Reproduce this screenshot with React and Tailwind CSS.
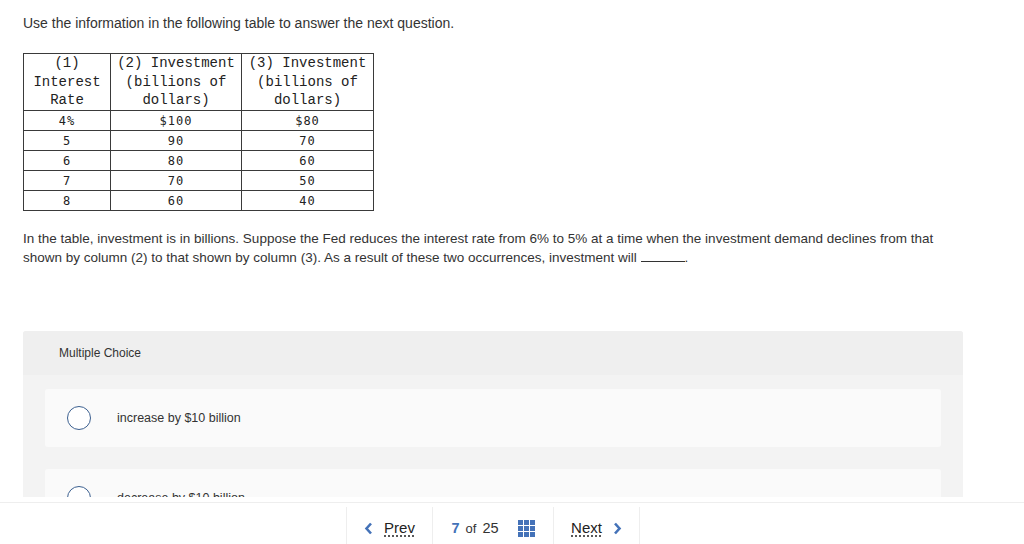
import React from "react";

const rows = [
  ["4%", "$100", "$80"],
  ["5", "90", "70"],
  ["6", "80", "60"],
  ["7", "70", "50"],
  ["8", "60", "40"],
];

const options = ["increase by $10 billion", "decrease by $10 billion"];

const GridIcon = () => (
  <svg width="17" height="17" viewBox="0 0 17 17" fill="#4472b8">
    {[0, 6, 12].map((y) =>
      [0, 6, 12].map((x) => (
        <rect key={`${x}-${y}`} x={x} y={y} width="5" height="5" />
      ))
    )}
  </svg>
);

const Chevron = ({ dir }) => (
  <svg width="9" height="13" viewBox="0 0 9 13" fill="none">
    <path
      d={dir === "left" ? "M7 1.5 L2.5 6.5 L7 11.5" : "M2 1.5 L6.5 6.5 L2 11.5"}
      stroke="#4472b8"
      strokeWidth="2.6"
    />
  </svg>
);

const App = () => {
  return (
    <div className="h-[544px] w-[1024px] flex flex-col bg-white text-[#333] font-['Liberation_Sans',Arial,sans-serif] overflow-hidden">
      {/* question area */}
      <div className="h-[497px] overflow-hidden pl-[23px] pt-[14px] w-[963px]">
        <p className="text-[14px] leading-[19px]">
          Use the information in the following table to answer the next question.
        </p>

        <table className="mt-[20px] border-collapse border border-[#3a3a3a] text-[#222]">
          <thead>
            <tr className="font-['Liberation_Mono',monospace] text-[14px] leading-[18.5px]">
              <th className="w-[87px] h-[57px] border border-[#3a3a3a] font-normal align-middle">
                (1)<br />Interest<br />Rate
              </th>
              <th className="w-[131px] border border-[#3a3a3a] font-normal">
                (2) Investment<br />(billions of<br />dollars)
              </th>
              <th className="w-[132px] border border-[#3a3a3a] font-normal">
                (3) Investment<br />(billions of<br />dollars)
              </th>
            </tr>
          </thead>
          <tbody className="font-['DejaVu_Sans_Mono',monospace] text-[12px] tracking-[1px]">
            {rows.map((r, i) => (
              <tr key={i} className="h-[20px]">
                {r.map((c, j) => (
                  <td key={j} className="border border-[#3a3a3a] text-center leading-[18px]">
                    {c}
                  </td>
                ))}
              </tr>
            ))}
          </tbody>
        </table>

        <p className="mt-[18px] text-[13.5px] leading-[19px] pr-[4px]">
          In the table, investment is in billions. Suppose the Fed reduces the interest rate from 6% to 5% at a time
          when the investment demand declines from that shown by column (2) to that shown by column (3). As a result of
          these two occurrences, investment will <span className="inline-block w-[44px] border-b border-[#333]" />.
        </p>

        {/* multiple choice panel */}
        <div className="mt-[64px] w-[940px] rounded-t-[3px] bg-[#f3f3f3]">
          <div className="h-[44px] flex items-center pl-[36px] bg-[#efefef] rounded-t-[3px] text-[12px]">
            Multiple Choice
          </div>
          <div className="px-[22px] pt-[14px] flex flex-col gap-[22px] pb-6">
            {options.map((o) => (
              <div key={o} className="h-[58px] rounded-[3px] bg-[#fafafa] flex items-center">
                <span className="ml-[22px] w-[24px] h-[24px] rounded-full border border-[#3b5f8f] bg-white" />
                <span className="ml-[26px] text-[12.5px]">{o}</span>
              </div>
            ))}
          </div>
        </div>
      </div>

      {/* bottom navigation */}
      <div className="mt-[5px] flex-1 border-t border-[#eee] w-[1024px]">
        <div className="w-[986px] flex justify-center pt-[4px] h-full">
          <div className="flex h-full border-l border-r border-[#eee]">
            <div className="w-[85px] pt-[6px] flex items-center justify-center gap-[11px] text-[15px]">
              <Chevron dir="left" />
              <span className="underline decoration-dotted underline-offset-2 text-[#222]">Prev</span>
            </div>
            <div className="w-[122px] pt-[6px] border-l border-r border-[#eee] flex items-center justify-center text-[14.5px]">
              <span className="font-bold text-[#4472b8]">7</span>
              <span className="ml-[6px] text-[13px]">of</span>
              <span className="ml-[6px]">25</span>
              <span className="ml-[19px]"><GridIcon /></span>
            </div>
            <div className="w-[85px] pt-[6px] flex items-center justify-center gap-[11px] text-[15px]">
              <span className="underline decoration-dotted underline-offset-2 text-[#222]">Next</span>
              <Chevron dir="right" />
            </div>
          </div>
        </div>
      </div>
    </div>
  );
};

export default App;
